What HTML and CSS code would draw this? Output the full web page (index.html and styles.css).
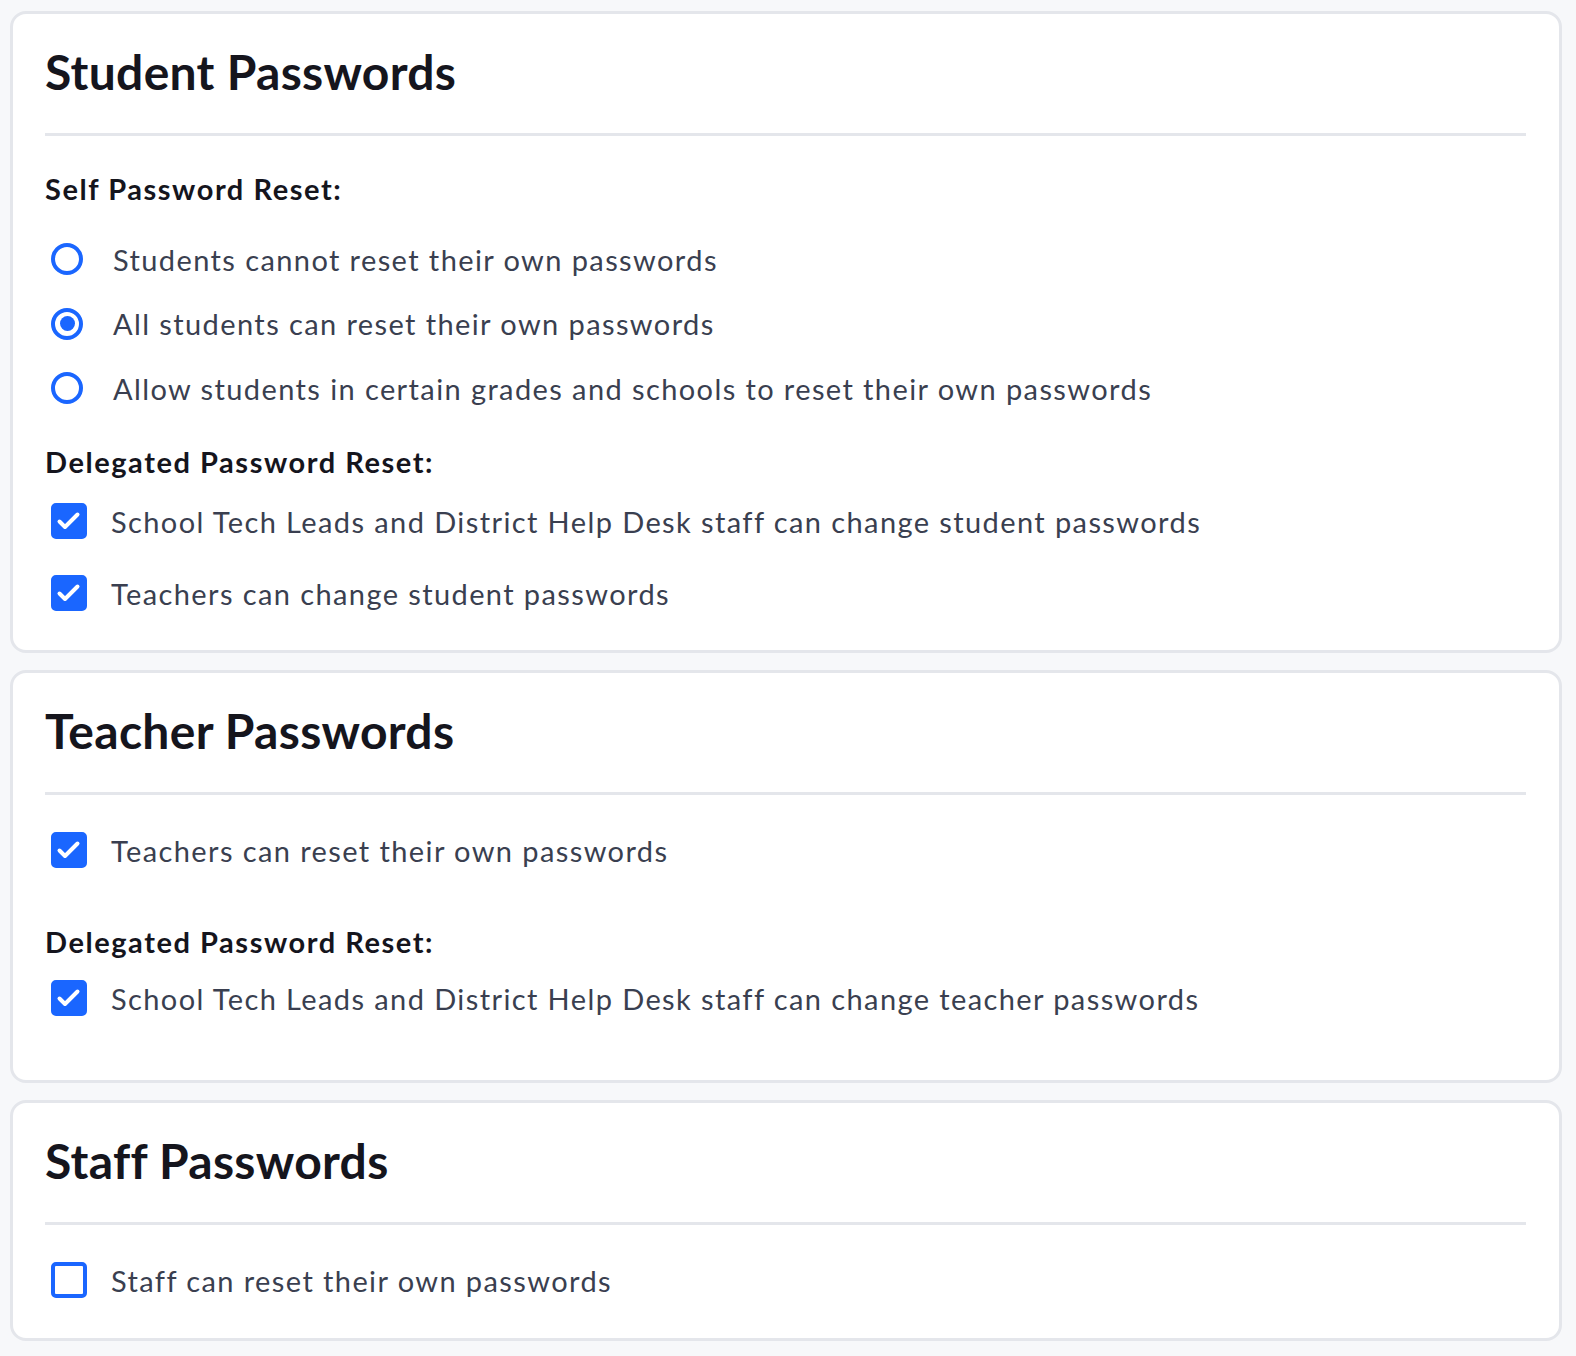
FILE: index.html
```html
<!DOCTYPE html>
<html lang="en">
  <head>
    <meta charset="UTF-8" />
    <meta name="viewport" content="width=device-width, initial-scale=1.0" />
    <title>Password Settings</title>
    <link rel="stylesheet" href="styles.css">
  </head>
  <body>
    <div class="page">
      <section class="card card-student">
        <h2 class="card-title">Student Passwords</h2>

        <div class="group-label group-first">Self Password Reset:</div>
        <div class="option-list radio-list">
          <label class="option">
            <span class="radio"></span>
            <span class="option-text">Students cannot reset their own passwords</span>
          </label>
          <label class="option">
            <span class="radio is-checked"></span>
            <span class="option-text">All students can reset their own passwords</span>
          </label>
          <label class="option">
            <span class="radio"></span>
            <span class="option-text">Allow students in certain grades and schools to reset their own passwords</span>
          </label>
        </div>

        <div class="group-label">Delegated Password Reset:</div>
        <div class="option-list check-list">
          <label class="option">
            <span class="checkbox is-checked">
              <svg viewBox="0 0 36 36" width="36" height="36"><path d="M8.5 18.5 L14 24 L26.5 11.5" /></svg>
            </span>
            <span class="option-text">School Tech Leads and District Help Desk staff can change student passwords</span>
          </label>
          <label class="option">
            <span class="checkbox is-checked">
              <svg viewBox="0 0 36 36" width="36" height="36"><path d="M8.5 18.5 L14 24 L26.5 11.5" /></svg>
            </span>
            <span class="option-text">Teachers can change student passwords</span>
          </label>
        </div>
      </section>

      <section class="card card-teacher">
        <h2 class="card-title">Teacher Passwords</h2>

        <div class="option-list check-list single">
          <label class="option">
            <span class="checkbox is-checked">
              <svg viewBox="0 0 36 36" width="36" height="36"><path d="M8.5 18.5 L14 24 L26.5 11.5" /></svg>
            </span>
            <span class="option-text">Teachers can reset their own passwords</span>
          </label>
        </div>

        <div class="group-label group-spaced">Delegated Password Reset:</div>
        <div class="option-list check-list">
          <label class="option">
            <span class="checkbox is-checked">
              <svg viewBox="0 0 36 36" width="36" height="36"><path d="M8.5 18.5 L14 24 L26.5 11.5" /></svg>
            </span>
            <span class="option-text">School Tech Leads and District Help Desk staff can change teacher passwords</span>
          </label>
        </div>
      </section>

      <section class="card card-staff">
        <h2 class="card-title">Staff Passwords</h2>

        <div class="option-list check-list single">
          <label class="option">
            <span class="checkbox"></span>
            <span class="option-text">Staff can reset their own passwords</span>
          </label>
        </div>
      </section>
    </div>
  </body>
</html>
```

FILE: styles.css
```css
:root {
  --page-bg: #f7f8fa;
  --card-bg: #ffffff;
  --card-border: #e4e6eb;
  --title: #15151d;
  --text: #3a3f50;
  --blue: #1a66ff;
}

* {
  box-sizing: border-box;
  margin: 0;
  padding: 0;
}

html,
body {
  overflow: hidden;
}

body {
  font-family: Lato, "Open Sans", Arial, sans-serif;
  background: var(--page-bg);
  color: var(--text);
}

.page {
  display: flex;
  flex-direction: column;
  gap: 17px;
  padding: 11px 14px 0 10px;
}

.card {
  background: var(--card-bg);
  border: 3px solid var(--card-border);
  border-radius: 16px;
  padding: 28px 33px 35px 32px;
}

.card-teacher {
  padding-bottom: 60px;
}

.card-staff {
  padding-bottom: 36px;
}

.card-title {
  font-size: 48px;
  line-height: 60px;
  font-weight: 700;
  letter-spacing: 0.3px;
  color: var(--title);
  padding-bottom: 31px;
  border-bottom: 3px solid var(--card-border);
}

.group-label {
  font-size: 29px;
  line-height: 36px;
  font-weight: 700;
  letter-spacing: 1.55px;
  color: var(--title);
  margin-top: 34px;
}

.group-first {
  margin-top: 35px;
}

.group-spaced {
  margin-top: 52px;
}

.option-list {
  display: flex;
  flex-direction: column;
}

.radio-list {
  gap: 20.5px;
  margin-top: 30px;
}

.check-list {
  gap: 28px;
  margin-top: 19px;
}

.card-teacher .check-list {
  margin-top: 16px;
}

.card .check-list.single {
  margin-top: 33px;
}

.option {
  display: flex;
  align-items: center;
  gap: 24px;
  height: 44px;
  font-size: 29px;
  letter-spacing: 1.4px;
  cursor: pointer;
}

.radio {
  flex: none;
  width: 32px;
  height: 32px;
  margin-left: 6px;
  margin-right: 6px;
  border: 4px solid var(--blue);
  border-radius: 50%;
  display: flex;
  align-items: center;
  justify-content: center;
}

.radio.is-checked::after {
  content: "";
  width: 15px;
  height: 15px;
  border-radius: 50%;
  background: var(--blue);
}

.checkbox {
  flex: none;
  width: 36px;
  height: 36px;
  margin-left: 6px;
  border: 4px solid var(--blue);
  border-radius: 5px;
  position: relative;
}

.checkbox.is-checked {
  background: var(--blue);
}

.checkbox svg {
  position: absolute;
  top: -4px;
  left: -4px;
}

.checkbox path {
  fill: none;
  stroke: #ffffff;
  stroke-width: 4;
  stroke-linecap: round;
  stroke-linejoin: round;
}

.option-text {
  white-space: nowrap;
}
```
